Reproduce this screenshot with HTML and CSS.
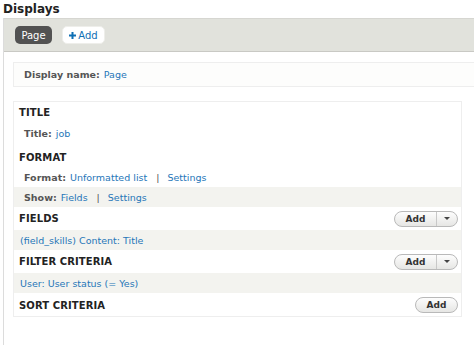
FILE: index.html
```html
<!DOCTYPE html>
<html>
<head>
<meta charset="utf-8">
<link rel="stylesheet" href="styles.css">
</head>
<body>
<div class="page">
  <h2 class="title">Displays</h2>
  <div class="display-wrap">
    <div class="tabs">
      <span class="tab active">Page</span>
      <span class="tab add"><svg class="plus" width="7" height="7" viewBox="0 0 7 7"><path d="M3.5 0V7M0 3.5H7" stroke="#0f6fb4" stroke-width="2"/></svg>Add</span>
    </div>
    <div class="content">
      <div class="display-name"><span class="label">Display name:</span><a class="link">Page</a></div>
      <div class="buckets">
        <div class="bucket">
          <div class="bucket-head short"><span class="bucket-title">Title</span></div>
          <div class="row label-row"><span class="label">Title:</span><a class="link">job</a></div>
        </div>
        <div class="bucket">
          <div class="bucket-head tall"><span class="bucket-title">Format</span></div>
          <div class="row label-row"><span class="label">Format:</span><a class="link">Unformatted list</a><span class="sep">|</span><a class="link">Settings</a></div>
          <div class="row label-row even"><span class="label">Show:</span><a class="link">Fields</a><span class="sep">|</span><a class="link">Settings</a></div>
        </div>
        <div class="bucket">
          <div class="bucket-head"><span class="bucket-title">Fields</span>
            <span class="dropbutton"><span class="db-main">Add</span><span class="db-toggle"><span class="arrow"></span></span></span>
          </div>
          <div class="row item-row even"><a class="link">(field_skills) Content: Title</a></div>
        </div>
        <div class="bucket">
          <div class="bucket-head"><span class="bucket-title">Filter criteria</span>
            <span class="dropbutton"><span class="db-main">Add</span><span class="db-toggle"><span class="arrow"></span></span></span>
          </div>
          <div class="row item-row even"><a class="link">User: User status (= Yes)</a></div>
        </div>
        <div class="bucket">
          <div class="bucket-head sort"><span class="bucket-title">Sort criteria</span>
            <span class="dropbutton single"><span class="db-main">Add</span></span>
          </div>
        </div>
      </div>
    </div>
  </div>
</div>
</body>
</html>
```

FILE: styles.css
```css
html, body {
  margin: 0;
  padding: 0;
  background: #ffffff;
  font-family: "DejaVu Sans", Verdana, sans-serif;
  color: #333;
}

.page {
  padding-left: 3px;
  overflow: hidden;
  height: 345px;
}

.title {
  margin: 0;
  font-size: 12px;
  font-weight: bold;
  line-height: 18px;
  color: #222;
}

.display-wrap {
  border-left: 1px solid #dcdcdc;
  min-height: 327px;
}

.tabs {
  display: flex;
  align-items: center;
  gap: 10px;
  padding-left: 11px;
  background: #e1e2dc;
  border-top: 1px solid #d6d6d1;
  border-bottom: 1px solid #c9c9c4;
  box-sizing: border-box;
  height: 34px;
}

.tab {
  display: inline-flex;
  align-items: center;
  justify-content: center;
  height: 18px;
  border-radius: 5px;
  font-size: 10px;
  box-sizing: border-box;
}

.tab.active {
  width: 37px;
  background: #525252;
  color: #ffffff;
}

.tab.add {
  width: 43px;
  background: #ffffff;
  color: #0f6fb4;
  border: 1px solid #eeeeea;
}

.plus {
  margin-right: 2px;
}

.content {
  padding: 10px 0 0 9px;
}

.display-name {
  height: 25px;
  box-sizing: border-box;
  border: 1px solid #eeeeee;
  border-right: none;
  background: #fdfdfc;
  padding-left: 10px;
  display: flex;
  align-items: center;
  font-size: 9.5px;
}

.label {
  font-weight: bold;
  color: #555;
  margin-right: 4px;
}

.link {
  color: #2676b8;
  text-decoration: none;
}

.buckets {
  margin-top: 14px;
  margin-right: 12px;
  border: 1px solid #eeeeee;
}

.bucket-head {
  display: flex;
  align-items: center;
  justify-content: space-between;
  box-sizing: border-box;
  height: 23px;
  padding-left: 5px;
  padding-right: 3px;
}

.bucket-head.short {
  height: 21px;
}

.bucket-head.tall {
  height: 24px;
  padding-top: 4px;
}

.bucket-head.sort {
  height: 23px;
  padding-top: 1px;
}

.bucket-title {
  font-size: 10px;
  font-weight: bold;
  text-transform: uppercase;
  color: #222;
  letter-spacing: 0.1px;
}

.row {
  height: 20px;
  display: flex;
  align-items: center;
  font-size: 9.5px;
}

.label-row {
  padding-left: 10px;
}

.item-row {
  padding-left: 6px;
}

.row.even {
  background: #f3f3ef;
}

.sep {
  color: #555;
  margin: 0 8px 0 9px;
}

.dropbutton {
  display: inline-flex;
  align-items: stretch;
  height: 16px;
  box-sizing: border-box;
  border: 1px solid #b9b9b9;
  border-radius: 9px;
  background: linear-gradient(#fdfdfd, #e6e6e4);
  font-size: 9px;
  font-weight: bold;
  color: #333;
}

.db-main {
  width: 41px;
  display: flex;
  align-items: center;
  justify-content: center;
}

.db-toggle {
  width: 20px;
  border-left: 1px solid #c8c8c8;
  display: flex;
  align-items: center;
  justify-content: center;
}

.arrow {
  width: 0;
  height: 0;
  border-left: 3px solid transparent;
  border-right: 3px solid transparent;
  border-top: 3px solid #444;
}
```
